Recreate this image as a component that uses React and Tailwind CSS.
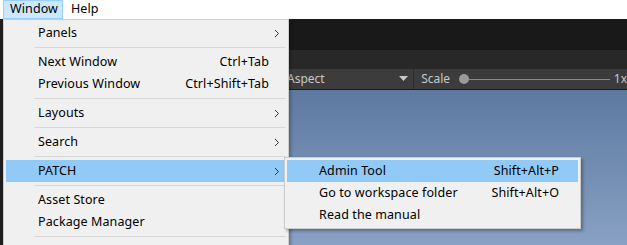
import React from "react";

function Chevron() {
  return (
    <svg width="6" height="9" viewBox="0 0 6 9" className="block">
      <polyline points="1,1 4.5,4.5 1,8" fill="none" stroke="#333" strokeWidth="1" />
    </svg>
  );
}

function MainItem({ label, shortcut, arrow, active }) {
  return (
    <div className={`h-[22px] flex items-center pl-[32px] ${active ? "bg-[#91c9f7]" : ""}`}>
      <span className="flex-1 whitespace-nowrap">{label}</span>
      {shortcut && <span className="whitespace-nowrap">{shortcut}</span>}
      <span className="w-[17px] h-full flex items-center pl-[5px]">{arrow ? <Chevron /> : null}</span>
    </div>
  );
}

function Sep() {
  return (
    <div className="h-[7px] pt-[3px] pl-[28px]">
      <div className="h-px bg-[#d7d7d7]" />
    </div>
  );
}

export default function App() {
  return (
    <div
      className="relative w-[627px] h-[245px] overflow-hidden text-[12.5px] tracking-[0.1px] text-black"
      style={{ fontFamily: '"Noto Sans", "Noto Sans CJK SC", sans-serif' }}
    >
      {/* top menu bar */}
      <div className="h-[19px] bg-white flex items-stretch">
        <div className="ml-[3px] w-[60px] h-[19px] border border-[#99d1ff] bg-[#cce8ff] flex items-center pl-[6px]">
          Window
        </div>
        <div className="pl-[8px] flex items-center">Help</div>
      </div>

      {/* editor area */}
      <div className="flex flex-col h-[226px]">
        <div className="h-[31px] bg-[#191919]" />
        <div className="h-[19px] bg-[#282828]" />
        <div className="h-[21px] bg-[#3c3c3c] border-b border-[#1c1c1c] flex items-center text-[#c8c8c8] text-[12px] tracking-normal">
          <div className="w-[415px] flex items-center h-full border-r border-[#2a2a2a]">
            <span className="pl-[287px] flex-1">Aspect</span>
            <svg width="9" height="6" viewBox="0 0 9 6" className="mr-[5px]">
              <polygon points="0,0 9,0 4.5,5" fill="#c8c8c8" />
            </svg>
          </div>
          <span className="pl-[7px]">Scale</span>
          <div className="ml-[9px] w-[151px] h-full flex items-center relative">
            <div className="flex-1 h-px bg-[#8a8a8a] ml-[4px]" />
            <div className="absolute left-[0px] top-[5px] w-[10px] h-[10px] rounded-full bg-[#9a9a9a]" />
          </div>
          <span className="pl-[4px]">1x</span>
        </div>
        <div className="flex-1 bg-gradient-to-b from-[#5e79a0] to-[#88a1c4]" />
      </div>

      {/* left dark strip */}
      <div className="absolute left-0 top-[19px] w-[3px] h-[226px] bg-[#1e1e1e]" />

      {/* main menu */}
      <div className="absolute left-[3px] top-[19px] w-[286px] bg-[#f0f0f0] border border-[#cccccc] p-[2px] shadow-[2px_2px_3px_rgba(0,0,0,0.25)]">
        <MainItem label="Panels" arrow />
        <Sep />
        <MainItem label="Next Window" shortcut="Ctrl+Tab" />
        <MainItem label="Previous Window" shortcut="Ctrl+Shift+Tab" />
        <Sep />
        <MainItem label="Layouts" arrow />
        <Sep />
        <MainItem label="Search" arrow />
        <Sep />
        <MainItem label="PATCH" arrow active />
        <Sep />
        <MainItem label="Asset Store" />
        <MainItem label="Package Manager" />
        <Sep />
        <div className="h-[10px]" />
      </div>

      {/* submenu */}
      <div className="absolute left-[284px] top-[157px] w-[297px] bg-[#f0f0f0] border border-[#cccccc] p-[2px] shadow-[2px_2px_3px_rgba(0,0,0,0.3)]">
        <div className="h-[22px] flex items-center pl-[32px] pr-[19px] bg-[#91c9f7]">
          <span className="flex-1">Admin Tool</span>
          <span>Shift+Alt+P</span>
        </div>
        <div className="h-[22px] flex items-center pl-[32px] pr-[19px]">
          <span className="flex-1">Go to workspace folder</span>
          <span>Shift+Alt+O</span>
        </div>
        <div className="h-[22px] flex items-center pl-[32px] pr-[19px]">
          <span className="flex-1">Read the manual</span>
        </div>
      </div>
    </div>
  );
}
